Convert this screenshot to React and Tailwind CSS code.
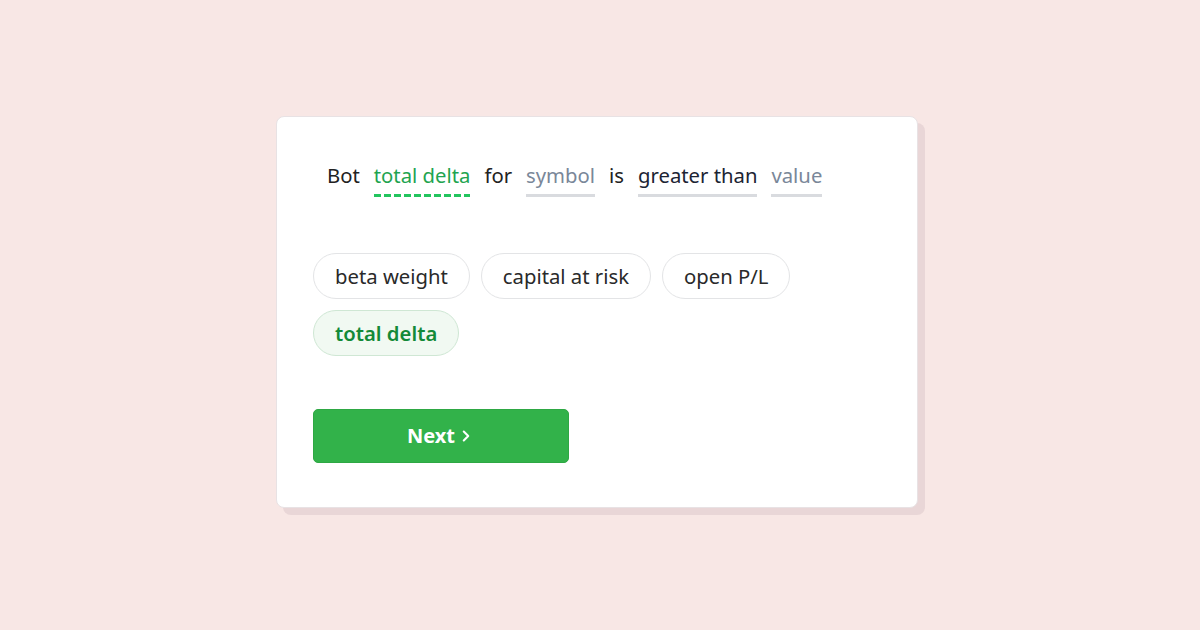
import { ChevronRight } from "lucide-react";

const chips = [
    { label: "beta weight", active: false },
    { label: "capital at risk", active: false },
    { label: "open P/L", active: false },
    { label: "total delta", active: true },
];

function Blank({ children, tone }) {
    if (tone === "active") {
        return (
            <span className="relative text-[#1fa450]">
                {children}
                <span className="absolute left-0 right-0 bottom-[-6px] h-[3px] bg-[repeating-linear-gradient(90deg,#22c55e_0,#22c55e_7px,transparent_7px,transparent_10px)]" />
            </span>
        );
    }
    return (
        <span
            className={
                "border-b-[3px] border-[#d9dbdf] pb-[3px] " +
                (tone === "muted" ? "text-[#7a8799]" : "text-[#1c2433]")
            }
        >
            {children}
        </span>
    );
}

export default function App() {
    return (
        <main
            className="flex min-h-screen w-full items-center justify-center bg-[#f8e7e5] pr-[6px] pb-[6px]"
            style={{ fontFamily: '"Noto Sans", "Liberation Sans", sans-serif' }}
        >
            <div className="w-[642px] h-[392px] rounded-[8px] border border-[#e8e2e4] bg-white px-[36px] pt-[42px] shadow-[7px_7px_0_#e9d6d7]">
                <div className="flex items-baseline gap-[14px] pl-[14px] text-[20.3px] leading-[32px] text-[#222]">
                    <span>Bot</span>
                    <Blank tone="active">total delta</Blank>
                    <span>for</span>
                    <Blank tone="muted">symbol</Blank>
                    <span>is</span>
                    <Blank>greater than</Blank>
                    <Blank tone="muted">value</Blank>
                </div>

                <div className="mt-[56px] flex w-[520px] flex-wrap gap-[11px]">
                    {chips.map((c) => (
                        <button
                            key={c.label}
                            className={
                                "h-[46px] rounded-full border-[1.5px] px-[21px] text-[20.3px] " +
                                (c.active
                                    ? "border-[#cfe7d4] bg-[#f1f9f2] font-semibold text-[#138a38]"
                                    : "border-[#e3e4e6] bg-white text-[#2a2a2a]")
                            }
                        >
                            {c.label}
                        </button>
                    ))}
                </div>

                <button className="mt-[53px] flex h-[54px] w-[256px] items-center justify-center gap-[2px] rounded-[5px] border border-[#2ea844] bg-[#32b24a] text-[20px] font-bold text-white">
                    Next
                    <ChevronRight size={18} strokeWidth={2.75} />
                </button>
            </div>
        </main>
    );
}
